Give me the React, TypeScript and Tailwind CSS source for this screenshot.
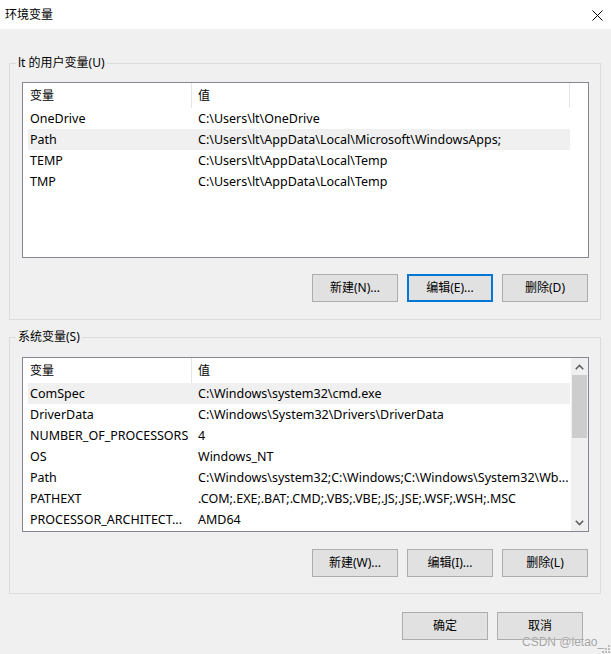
import React from "react";

const FONT = { fontFamily: '"Noto Sans", "Noto Sans CJK SC", sans-serif' };

function Btn({ label, focused }: { label: string; focused?: boolean }) {
  return (
    <div
      className={
        "w-[86px] h-[28px] bg-[#e1e1e1] flex items-center justify-center text-[12px] text-black " +
        (focused ? "border-2 border-[#0078d7]" : "border border-[#adadad]")
      }
    >
      {label}
    </div>
  );
}

function Group({ label, children, className }: { label: string; children: React.ReactNode; className?: string }) {
  return (
    <div className={"relative w-[592px] border border-[#dcdcdc] pl-[12px] pr-[11px] " + (className || "")}>
      <div className="absolute left-[6px] top-[-9px] px-[2px] bg-[#f0f0f0] text-[12px] leading-[16px] text-black">
        {label}
      </div>
      {children}
    </div>
  );
}

function Header({ third }: { third?: boolean }) {
  return (
    <div className="h-[25px] flex items-stretch text-[12px] text-black shrink-0">
      <div className="w-[169px] pl-[7px] flex items-center border-r border-[#e5e5e5]">变量</div>
      <div className={"w-[378px] pl-[6px] flex items-center " + (third ? "border-r border-[#e5e5e5]" : "")}>值</div>
    </div>
  );
}

function Row({ name, value, selected }: { name: string; value: string; selected?: boolean }) {
  return (
    <div
      className={
        "ml-[5px] w-[542px] h-[21px] flex items-center pt-[2px] text-[12.5px] text-black whitespace-nowrap " +
        (selected ? "bg-[#f0f0f0]" : "")
      }
    >
      <div className="w-[164px] pl-[2px] overflow-hidden">{name}</div>
      <div className="flex-1 pl-[6px] overflow-hidden">{value}</div>
    </div>
  );
}

function Chevron({ up }: { up?: boolean }) {
  return (
    <svg width="9" height="6" viewBox="0 0 9 6">
      <path
        d={up ? "M0.8 5.2 L4.5 1.5 L8.2 5.2" : "M0.8 0.8 L4.5 4.5 L8.2 0.8"}
        fill="none"
        stroke="#606060"
        strokeWidth="1.6"
      />
    </svg>
  );
}

export default function App() {
  const userVars: [string, string][] = [
    ["OneDrive", "C:\\Users\\lt\\OneDrive"],
    ["Path", "C:\\Users\\lt\\AppData\\Local\\Microsoft\\WindowsApps;"],
    ["TEMP", "C:\\Users\\lt\\AppData\\Local\\Temp"],
    ["TMP", "C:\\Users\\lt\\AppData\\Local\\Temp"],
  ];
  const sysVars: [string, string][] = [
    ["ComSpec", "C:\\Windows\\system32\\cmd.exe"],
    ["DriverData", "C:\\Windows\\System32\\Drivers\\DriverData"],
    ["NUMBER_OF_PROCESSORS", "4"],
    ["OS", "Windows_NT"],
    ["Path", "C:\\Windows\\system32;C:\\Windows;C:\\Windows\\System32\\Wb..."],
    ["PATHEXT", ".COM;.EXE;.BAT;.CMD;.VBS;.VBE;.JS;.JSE;.WSF;.WSH;.MSC"],
    ["PROCESSOR_ARCHITECT...", "AMD64"],
  ];

  return (
    <div className="w-[611px] h-[654px] bg-[#f0f0f0] relative overflow-hidden" style={FONT}>
      {/* Title bar */}
      <div className="h-[29px] bg-white flex items-center justify-between pl-[5px] pr-[8px]">
        <span className="text-[12px] text-black">环境变量</span>
        <svg width="11" height="11" viewBox="0 0 11 11" className="mt-[1px]">
          <path d="M0.5 0.5 L10.5 10.5 M10.5 0.5 L0.5 10.5" stroke="#000" strokeWidth="1" />
        </svg>
      </div>

      <div className="pl-[9px] pt-[34px] flex flex-col">
        {/* User variables */}
        <Group label="lt 的用户变量(U)" className="pt-[18px] pb-[17px]">
          <div className="w-[567px] h-[176px] border border-[#828790] bg-white flex flex-col">
            <Header third />
            {userVars.map(([n, v], i) => (
              <Row key={n} name={n} value={v} selected={i === 1} />
            ))}
          </div>
          <div className="mt-[16px] flex justify-end gap-[9px] pr-[1px]">
            <Btn label="新建(N)..." />
            <Btn label="编辑(E)..." focused />
            <Btn label="删除(D)" />
          </div>
        </Group>

        {/* System variables */}
        <Group label="系统变量(S)" className="mt-[17px] pt-[19px] pb-[16px]">
          <div className="w-[567px] h-[175px] border border-[#828790] bg-white flex">
            <div className="flex-1 flex flex-col">
              <Header />
              {sysVars.map(([n, v], i) => (
                <Row key={n + i} name={n} value={v} selected={i === 0} />
              ))}
            </div>
            <div className="w-[17px] bg-[#f0f0f0] flex flex-col">
              <div className="h-[17px] flex items-center justify-center">
                <Chevron up />
              </div>
              <div className="h-[63px] bg-[#cdcdcd] mx-[1px]" />
              <div className="flex-1" />
              <div className="h-[17px] flex items-center justify-center">
                <Chevron />
              </div>
            </div>
          </div>
          <div className="mt-[17px] flex justify-end gap-[9px] pr-[1px]">
            <Btn label="新建(W)..." />
            <Btn label="编辑(I)..." />
            <Btn label="删除(L)" />
          </div>
        </Group>

        {/* OK / Cancel */}
        <div className="mt-[18px] flex justify-end gap-[9px] pr-[28px] w-[611px] -ml-[9px]">
          <Btn label="确定" />
          <Btn label="取消" />
        </div>
      </div>

      {/* Watermark */}
      <div
        className="absolute left-[522px] top-[635px] text-[12px] leading-[14px] text-[#a3a3a3] whitespace-nowrap"
        style={{ fontFamily: '"Liberation Sans", sans-serif', textShadow: "0 0 1px #fff" }}
      >
        CSDN @letao_
      </div>

      {/* Resize grip */}
      <svg className="absolute right-[1px] bottom-[1px]" width="10" height="10" viewBox="0 0 10 10">
        {[
          [8, 0],
          [8, 3],
          [5, 3],
          [8, 6],
          [5, 6],
          [2, 6],
        ].map(([x, y], i) => (
          <rect key={i} x={x} y={y + 2} width="2" height="2" fill="#bdbdbd" />
        ))}
      </svg>
    </div>
  );
}
